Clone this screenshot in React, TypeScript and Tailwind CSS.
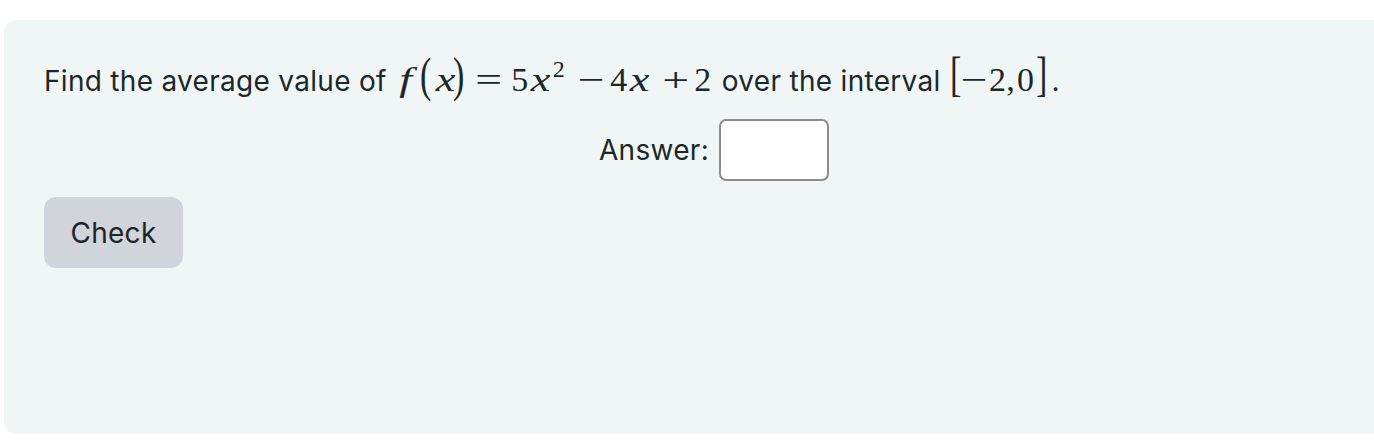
import React from 'react';

const sans = { fontFamily: 'Inter, "Noto Sans", sans-serif' };

// one math glyph in a fixed-width cell, centered
function G({ className, children }: { className: string; children: React.ReactNode }) {
  return <span className={`inline-flex justify-center ${className}`}>{children}</span>;
}

function Stretch({ className, children }: { className: string; children: React.ReactNode }) {
  return <span className={`inline-block ${className}`}>{children}</span>;
}

export default function App() {
  return (
    <div className="w-full h-[440px] overflow-hidden bg-white pt-5 pl-1" style={sans}>
      <div className="w-[1420px] h-[414px] rounded-[12px] bg-[#f0f6f6] px-10 pt-[36px] text-[#1c2828]">
        <p className="text-[28px] tracking-[0.3px] leading-[48px] whitespace-nowrap">
          Find the average value of
          <span className="ml-[11px] font-['Liberation_Serif',serif] text-[34px] tracking-normal">
            <G className="w-[26px] italic">
              <Stretch className="-translate-x-[5px] scale-x-[1.35]">f</Stretch>
            </G>
            <G className="-ml-[5px] w-[14px]">
              <Stretch className="-translate-y-[5px] scale-y-[1.45]">(</Stretch>
            </G>
            <G className="ml-[1.5px] w-[22px] italic">
              <Stretch className="scale-x-[1.3]">x</Stretch>
            </G>
            <G className="-ml-[1.5px] w-[8px]">
              <Stretch className="-translate-y-[5px] scale-y-[1.45]">)</Stretch>
            </G>
            <G className="ml-[13px] w-[26px]">
              <Stretch className="scale-x-[1.4]">=</Stretch>
            </G>
            <G className="ml-[11px] w-[14px]">5</G>
            <G className="ml-[2px] w-[24px] italic">
              <Stretch className="scale-x-[1.3]">x</Stretch>
            </G>
            <G className="ml-[1px] w-[10px] relative -top-[14px] text-[24px]">2</G>
            <G className="ml-[15px] w-[24px]">
              <Stretch className="scale-x-[1.4]">−</Stretch>
            </G>
            <G className="ml-[8px] w-[16px]">4</G>
            <G className="ml-[1px] w-[24px] italic">
              <Stretch className="scale-x-[1.3]">x</Stretch>
            </G>
            <G className="ml-[11px] w-[26px]">
              <Stretch className="scale-x-[1.4]">+</Stretch>
            </G>
            <G className="ml-[6px] w-[16px]">2</G>
          </span>
          <span className="ml-[11px]">over the interval</span>
          <span className="ml-[10px] font-['Liberation_Serif',serif] text-[34px] tracking-normal">
            <G className="w-[10px]">
              <Stretch className="-translate-y-[5px] scale-y-[1.4]">[</Stretch>
            </G>
            <G className="ml-[0.5px] w-[25px]">
              <Stretch className="scale-x-[1.4]">−</Stretch>
            </G>
            <G className="ml-[3.5px] w-[16px]">2</G>
            <G className="ml-[2px] w-[6px]">,</G>
            <G className="ml-[4px] w-[16px]">0</G>
            <G className="ml-[3px] w-[10px]">
              <Stretch className="-translate-y-[5px] scale-y-[1.4]">]</Stretch>
            </G>
          </span>
          <span className="ml-[5px]">.</span>
        </p>
        <div className="flex items-center justify-center gap-[10px] mt-[12px]">
          <span className="text-[28px] tracking-[0.3px]">Answer:</span>
          <input
            type="text"
            className="w-[110px] h-[62px] rounded-[7px] border-2 border-[#8c8c8c] bg-white outline-none"
          />
        </div>
        <button className="mt-[16px] w-[139px] h-[71px] rounded-[12px] bg-[#d1d5db] text-[28px] tracking-[0.3px] text-[#1f2328]">
          Check
        </button>
      </div>
    </div>
  );
}
